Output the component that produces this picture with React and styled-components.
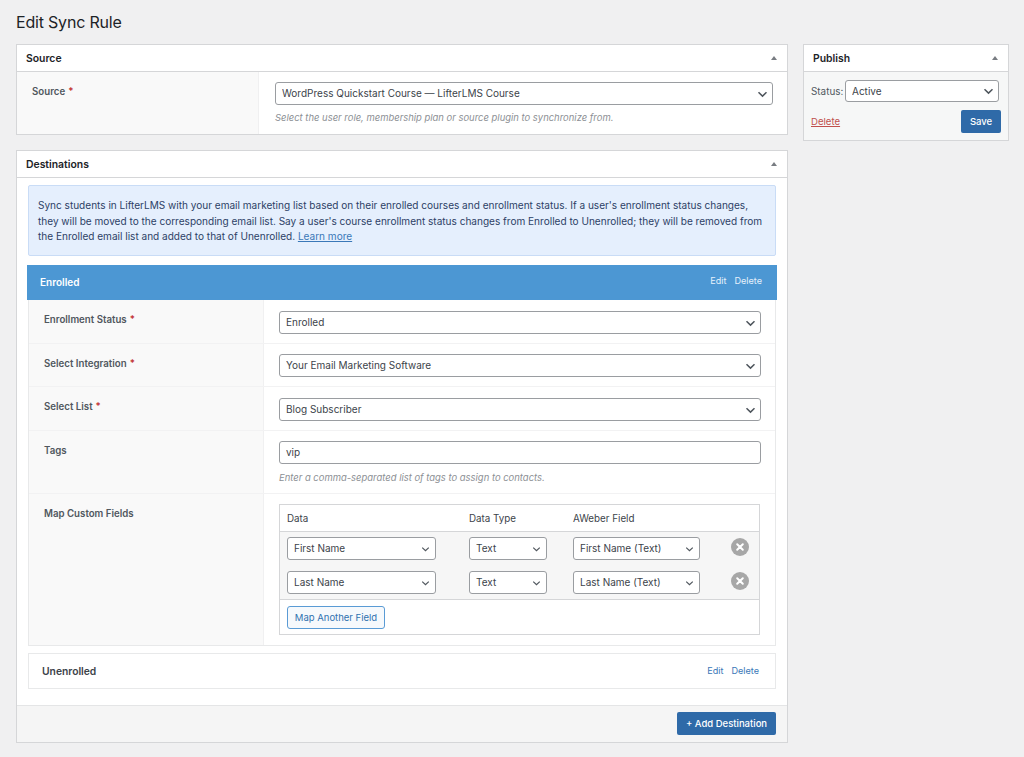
import React from "react";
import styled, { createGlobalStyle } from "styled-components";

const Global = createGlobalStyle`
  html, body { margin: 0; padding: 0; background: #f0f0f1; }
  body { font-family: Inter, "Liberation Sans", sans-serif; color: #3c434a; font-size: 10px; overflow: hidden; }
  * { box-sizing: border-box; }
`;

const Page = styled.div`
  width: 1024px;
  height: 757px;
  padding: 0 15px 0 16px;
`;
const Title = styled.h1`
  margin: 0;
  height: 44px;
  padding-top: 12px;
  font-size: 16px;
  line-height: 20px;
  font-weight: 400;
  letter-spacing: -0.2px;
  color: #1d2327;
`;
const Columns = styled.div`
  display: grid;
  grid-template-columns: 772px 206px;
  column-gap: 15px;
  align-items: start;
`;
const MainColumn = styled.div`
  display: flex;
  flex-direction: column;
  gap: 15px;
`;
const Box = styled.section`
  background: #fff;
  border: 1px solid #d5d6d8;
`;
const BoxHeader = styled.header`
  height: 27px;
  padding: 0 10px 0 9px;
  border-bottom: 1px solid #d5d6d8;
  display: flex;
  align-items: center;
  justify-content: space-between;
  font-size: 10.4px;
  font-weight: 600;
  color: #1d2327;
`;
const Caret = styled.span`
  width: 0;
  height: 0;
  border-left: 3px solid transparent;
  border-right: 3px solid transparent;
  border-bottom: 4px solid #787c82;
`;
const SourceRow = styled.div`
  display: grid;
  grid-template-columns: 242px 1fr;
  height: 62px;
`;
const Label = styled.div`
  background: #f9f9f9;
  border-right: 1px solid #f0f0f1;
  padding: 13px 0 0 15px;
  font-size: 9.7px;
  font-weight: 600;
  line-height: 13px;
  color: #50575e;
`;
const Required = styled.span`
  color: #c02b2b;
  margin-left: 3px;
`;
const Field = styled.div`
  padding: ${(p) => p.$top || 10}px 14px 0 ${(p) => p.$left || 15}px;
`;
const Hint = styled.p`
  margin: ${(p) => p.$gap || 7}px 0 0;
  font-size: 9.45px;
  line-height: 12px;
  font-style: italic;
  color: #8c8f94;
`;
const SelectWrap = styled.div`
  position: relative;
  width: ${(p) => (p.$w ? `${p.$w}px` : "100%")};
  flex: none;
  svg {
    position: absolute;
    right: ${(p) => (p.$small ? 6 : 5)}px;
    top: 50%;
    transform: translateY(-50%);
    pointer-events: none;
    color: #50575e;
  }
`;
const NativeSelect = styled.select`
  appearance: none;
  display: block;
  width: 100%;
  height: ${(p) => p.$h || 23}px;
  padding: 0 20px ${(p) => (p.$h ? 0 : 2)}px 6px;
  background: #fff;
  border: 1px solid #9a9da1;
  border-radius: 3px;
  font: 400 10px Inter, "Liberation Sans", sans-serif;
  color: #3c434a;
`;
const TextInput = styled.input`
  display: block;
  width: 100%;
  height: 23px;
  padding: 0 6px 2px;
  background: #fff;
  border: 1px solid #9a9da1;
  border-radius: 3px;
  font: 400 10px Inter, "Liberation Sans", sans-serif;
  color: #3c434a;
`;
const Chevron = ({ size }) => (
  <svg width={size} height={size} viewBox="0 0 11 11" fill="none" stroke="currentColor" strokeWidth="1.5">
    <path d="M1.5 3.8 5.5 7.6 9.5 3.8" />
  </svg>
);
const Select = ({ value, w, h, small }) => (
  <SelectWrap $w={w} $small={small}>
    <NativeSelect $h={h} defaultValue={value}>
      <option>{value}</option>
    </NativeSelect>
    <Chevron size={small ? 9 : 11} />
  </SelectWrap>
);
const Notice = styled.div`
  margin: 7px 11px 0;
  height: 71px;
  padding: 12px 10px 0 9px;
  background: #e5effd;
  border: 1px solid #c9dcf6;
  border-radius: 2px;
  font-size: 10.05px;
  line-height: 15.6px;
  color: #2d3f66;
  a { color: #3a78b8; text-decoration: underline; }
`;
const Destination = styled.div`
  margin: 9px 10px 0;
`;
const DestHeader = styled.div`
  height: 35px;
  padding: 0 15px 2px 13px;
  background: #4c97d3;
  color: #fff;
  display: flex;
  align-items: center;
  justify-content: space-between;
  font-size: 10px;
  font-weight: 600;
`;
const Actions = styled.div`
  display: flex;
  gap: 8px;
  margin-top: -2px;
  font-size: 9.1px;
  font-weight: 400;
  color: ${(p) => p.$color};
`;
const DestBody = styled.div`
  margin: 0 1px;
  border: 1px solid #e8e9ea;
  border-top: 0;
`;
const FormRow = styled.div`
  display: grid;
  grid-template-columns: 235px 1fr;
  height: ${(p) => p.$h}px;
  border-bottom: ${(p) => (p.$last ? "none" : "1px solid #f2f2f3")};
`;
const MapTable = styled.div`
  width: 481px;
  border: 1px solid #d5d6d8;
`;
const MapHead = styled.div`
  display: grid;
  grid-template-columns: 182px 104px 1fr;
  height: 27px;
  padding-left: 7px;
  align-items: center;
  border-bottom: 1px solid #d5d6d8;
  font-size: 9.8px;
  color: #3c434a;
`;
const MapRows = styled.div`
  background: #f6f6f6;
  padding: 5px 0 5px 7px;
  height: 68px;
  border-bottom: 1px solid #d5d6d8;
  display: flex;
  flex-direction: column;
  gap: 11px;
`;
const MapRow = styled.div`
  display: flex;
  align-items: center;
`;
const RemoveButton = styled.span`
  width: 18px;
  height: 18px;
  margin-left: 31px;
  margin-top: -3px;
  border-radius: 50%;
  background: #a7a7a7;
  display: flex;
  align-items: center;
  justify-content: center;
`;
const Gap = styled.span`
  width: ${(p) => p.$w}px;
  flex: none;
`;
const MapFooter = styled.div`
  height: 34px;
  padding: 6px 7px;
`;
const OutlineButton = styled.button`
  display: block;
  width: 98px;
  height: 23px;
  padding: 0;
  background: #f6f9fc;
  border: 1px solid #5a9bd5;
  border-radius: 3px;
  font: 400 9.5px Inter, "Liberation Sans", sans-serif;
  color: #2f72b0;
`;
const Collapsed = styled.div`
  margin: 7px 11px 0;
  height: 36px;
  padding: 0 16px 0 13px;
  border: 1px solid #e8e9ea;
  display: flex;
  align-items: center;
  justify-content: space-between;
  font-size: 10.3px;
  font-weight: 600;
  color: #3c434a;
`;
const BoxFooter = styled.div`
  margin-top: 16px;
  height: 37px;
  padding: 6px 11px 0 0;
  background: #f5f5f5;
  border-top: 1px solid #e4e5e6;
  display: flex;
  justify-content: flex-end;
  align-items: flex-start;
`;
const PrimaryButton = styled.button`
  height: 23px;
  width: ${(p) => p.$w}px;
  padding: 0;
  background: #2f6aa8;
  border: 0;
  border-radius: 2px;
  font: 500 9.5px Inter, "Liberation Sans", sans-serif;
  color: #fff;
`;
const PublishBody = styled.div`
  background: #f6f7f7;
  height: 68px;
  padding: 8px 7px 0 7px;
`;
const StatusRow = styled.div`
  display: flex;
  align-items: center;
  justify-content: space-between;
  padding-right: 2px;
  font-size: 9.9px;
  color: #50575e;
`;
const PublishActions = styled.div`
  display: flex;
  align-items: center;
  justify-content: space-between;
  margin-top: 8px;
`;
const DeleteLink = styled.a`
  font-size: 9.6px;
  color: #c0504d;
  text-decoration: underline;
`;

const XIcon = () => (
  <svg width="10" height="10" viewBox="0 0 10 10" stroke="#fff" strokeWidth="2" strokeLinecap="round">
    <path d="M2.2 2.2 7.8 7.8M7.8 2.2 2.2 7.8" />
  </svg>
);

const mapRows = [
  ["First Name", "First Name (Text)"],
  ["Last Name", "Last Name (Text)"],
];

export default function App() {
  return (
    <Page>
      <Global />
      <Title>Edit Sync Rule</Title>
      <Columns>
        <MainColumn>
          <Box>
            <BoxHeader>Source<Caret /></BoxHeader>
            <SourceRow>
              <Label>Source<Required>*</Required></Label>
              <Field $left={16}>
                <Select value="WordPress Quickstart Course — LifterLMS Course" />
                <Hint>Select the user role, membership plan or source plugin to synchronize from.</Hint>
              </Field>
            </SourceRow>
          </Box>
          <Box>
            <BoxHeader>Destinations<Caret /></BoxHeader>
            <Notice>
              Sync students in LifterLMS with your email marketing list based on their enrolled courses and enrollment status. If a user's enrollment status changes, they will be moved to the corresponding email list. Say a user's course enrollment status changes from Enrolled to Unenrolled; they will be removed from the Enrolled email list and added to that of Unenrolled. <a href="#more">Learn more</a>
            </Notice>
            <Destination>
              <DestHeader>
                Enrolled
                <Actions $color="#e6f1fb"><span>Edit</span><span>Delete</span></Actions>
              </DestHeader>
              <DestBody>
                <FormRow $h={44}>
                  <Label>Enrollment Status<Required>*</Required></Label>
                  <Field $top={11}><Select value="Enrolled" /></Field>
                </FormRow>
                <FormRow $h={43}>
                  <Label>Select Integration<Required>*</Required></Label>
                  <Field><Select value="Your Email Marketing Software" /></Field>
                </FormRow>
                <FormRow $h={44}>
                  <Label>Select List<Required>*</Required></Label>
                  <Field $top={11}><Select value="Blog Subscriber" /></Field>
                </FormRow>
                <FormRow $h={63}>
                  <Label>Tags</Label>
                  <Field>
                    <TextInput defaultValue="vip" />
                    <Hint $gap={8}>Enter a comma-separated list of tags to assign to contacts.</Hint>
                  </Field>
                </FormRow>
                <FormRow $h={151} $last>
                  <Label>Map Custom Fields</Label>
                  <Field>
                    <MapTable>
                      <MapHead><span>Data</span><span>Data Type</span><span>AWeber Field</span></MapHead>
                      <MapRows>
                        {mapRows.map(([data, field]) => (
                          <MapRow key={data}>
                            <Select value={data} w={149} small />
                            <Gap $w={33} />
                            <Select value="Text" w={78} small />
                            <Gap $w={26} />
                            <Select value={field} w={127} small />
                            <RemoveButton><XIcon /></RemoveButton>
                          </MapRow>
                        ))}
                      </MapRows>
                      <MapFooter><OutlineButton>Map Another Field</OutlineButton></MapFooter>
                    </MapTable>
                  </Field>
                </FormRow>
              </DestBody>
            </Destination>
            <Collapsed>
              Unenrolled
              <Actions $color="#3a78b8"><span>Edit</span><span>Delete</span></Actions>
            </Collapsed>
            <BoxFooter><PrimaryButton $w={99}>+ Add Destination</PrimaryButton></BoxFooter>
          </Box>
        </MainColumn>
        <Box>
          <BoxHeader>Publish<Caret /></BoxHeader>
          <PublishBody>
            <StatusRow>
              Status:
              <Select value="Active" w={154} h={22} />
            </StatusRow>
            <PublishActions>
              <DeleteLink href="#delete">Delete</DeleteLink>
              <PrimaryButton $w={40}>Save</PrimaryButton>
            </PublishActions>
          </PublishBody>
        </Box>
      </Columns>
    </Page>
  );
}
